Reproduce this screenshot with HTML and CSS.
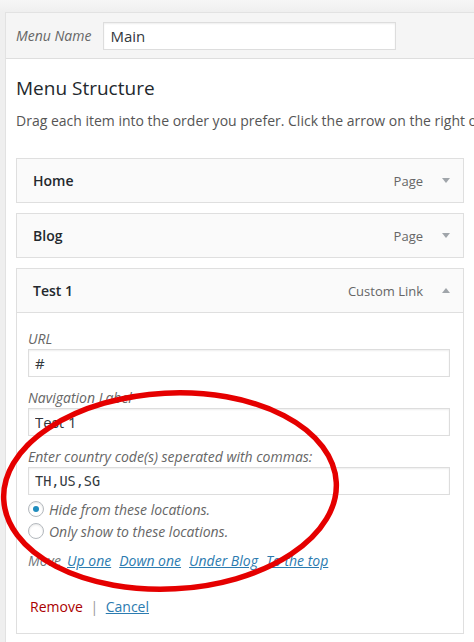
FILE: index.html
```html
<!DOCTYPE html>
<html lang="en">
<head>
<meta charset="utf-8">
<title>Menu Structure</title>
<link rel="stylesheet" href="styles.css">
</head>
<body>
<div class="wrap">
  <div class="panel">
    <div class="menu-header">
      <label class="name-label" for="menu-name">Menu Name</label>
      <input id="menu-name" class="name-input" type="text" value="Main">
    </div>
    <div class="menu-body">
      <h3 class="title">Menu Structure</h3>
      <p class="desc">Drag each item into the order you prefer. Click the arrow on the right of the item to reveal additional configuration options.</p>
      <ul class="items">
        <li class="item">
          <div class="item-bar">
            <span class="item-title">Home</span>
            <span class="item-type">Page</span>
            <svg class="arrow" width="8" height="5" viewBox="0 0 8 5"><polygon points="0,0 8,0 4,5" fill="#a0a5aa"/></svg>
          </div>
        </li>
        <li class="item">
          <div class="item-bar">
            <span class="item-title">Blog</span>
            <span class="item-type">Page</span>
            <svg class="arrow" width="8" height="5" viewBox="0 0 8 5"><polygon points="0,0 8,0 4,5" fill="#a0a5aa"/></svg>
          </div>
        </li>
        <li class="item open">
          <div class="item-bar">
            <span class="item-title">Test 1</span>
            <span class="item-type">Custom Link</span>
            <svg class="arrow" width="8" height="5" viewBox="0 0 8 5"><polygon points="0,5 8,5 4,0" fill="#a0a5aa"/></svg>
          </div>
          <div class="settings">
            <div class="field">
              <label class="field-label">URL</label>
              <input class="field-input" type="text" value="#">
            </div>
            <div class="field">
              <label class="field-label">Navigation Label</label>
              <input class="field-input" type="text" value="Test 1">
            </div>
            <div class="field">
              <label class="field-label">Enter country code(s) seperated with commas:</label>
              <input class="field-input mono" type="text" value="TH,US,SG">
            </div>
            <div class="radios">
              <label class="radio-row"><input type="radio" name="loc" checked><span>Hide from these locations.</span></label>
              <label class="radio-row"><input type="radio" name="loc"><span>Only show to these locations.</span></label>
            </div>
            <div class="move">
              <span class="move-label">Move</span>
              <a href="#">Up one</a>
              <a href="#">Down one</a>
              <a href="#">Under Blog</a>
              <a href="#">To the top</a>
            </div>
            <div class="actions">
              <a class="remove" href="#">Remove</a>
              <span class="sep">|</span>
              <a class="cancel" href="#">Cancel</a>
            </div>
          </div>
        </li>
      </ul>
    </div>
  </div>
</div>
<svg class="annotation" width="474" height="642" viewBox="0 0 474 642">
  <ellipse cx="170" cy="491" rx="166.5" ry="98" transform="rotate(-3 170 491)" fill="none" stroke="#e50000" stroke-width="5.5"/>
</svg>
</body>
</html>
```

FILE: styles.css
```css
html, body {
  margin: 0;
  padding: 0;
}
body {
  width: 474px;
  height: 642px;
  overflow: hidden;
  position: relative;
  background: #fff;
  font-family: "Open Sans", "Liberation Sans", sans-serif;
  color: #444;
}
.wrap {
  padding-top: 12px;
  background: linear-gradient(#f6f6f6, #efefef 12px);
  min-height: 642px;
}
.panel {
  margin-left: 5px;
  border-left: 1px solid #e2e2e2;
  border-top: 1px solid #e2e2e2;
  background: #fff;
  min-height: 630px;
}
.menu-header {
  display: flex;
  align-items: center;
  gap: 12px;
  height: 46px;
  box-sizing: border-box;
  padding: 0 10px;
  background: #f5f5f5;
  border-bottom: 1px solid #dedede;
}
.name-label {
  font-style: italic;
  font-size: 14px;
  color: #666;
}
.name-input {
  box-sizing: border-box;
  width: 293px;
  height: 28px;
  padding: 0 6px;
  border: 1px solid #ddd;
  box-shadow: inset 0 1px 2px rgba(0,0,0,.07);
  background: #fff;
  font-family: "Open Sans", "Liberation Sans", sans-serif;
  font-size: 15px;
  color: #32373c;
  outline: none;
}
.menu-body {
  padding: 0 10px;
}
.title {
  margin: 16px 0 0;
  font-size: 19px;
  line-height: 26px;
  font-weight: 400;
  color: #23282d;
}
.desc {
  margin: 10px 0 0;
  font-size: 14px;
  line-height: 20px;
  color: #555;
  white-space: nowrap;
}
.items {
  list-style: none;
  margin: 27px 0 0;
  padding: 0;
  width: 448px;
}
.item {
  margin-bottom: 10px;
}
.item-bar {
  display: flex;
  align-items: center;
  height: 45px;
  box-sizing: border-box;
  padding: 0 13px 0 16px;
  background: #fafafa;
  border: 1px solid #dfdfdf;
}
.item-title {
  flex: 1;
  font-size: 14px;
  font-weight: 600;
  color: #23282d;
}
.item-type {
  font-size: 13px;
  color: #666;
  margin-right: 19px;
}
.arrow {
  display: block;
}
.settings {
  border: 1px solid #dfdfdf;
  border-top: none;
  padding: 16px 13px 16px 11px;
  background: #fff;
}
.field {
  margin-bottom: 11px;
}
.field-label {
  display: block;
  font-style: italic;
  font-size: 14px;
  line-height: 20px;
  color: #666;
}
.field-input {
  display: block;
  box-sizing: border-box;
  width: 422px;
  height: 28px;
  padding: 0 6px;
  border: 1px solid #ddd;
  box-shadow: inset 0 1px 2px rgba(0,0,0,.07);
  background: #fff;
  font-family: "Open Sans", "Liberation Sans", sans-serif;
  font-size: 15px;
  color: #32373c;
  outline: none;
}
.field-input.mono {
  font-family: "DejaVu Sans Mono", "Liberation Mono", monospace;
  font-size: 13.5px;
}
.radios {
  margin-top: -8px;
}
.radio-row {
  display: flex;
  align-items: center;
  gap: 5px;
  height: 22px;
  font-style: italic;
  font-size: 14px;
  color: #666;
}
.radio-row input {
  appearance: none;
  -webkit-appearance: none;
  margin: 0;
  width: 16px;
  height: 16px;
  border: 1px solid #b4b9be;
  border-radius: 50%;
  background: #fff;
  box-shadow: inset 0 1px 2px rgba(0,0,0,.1);
  display: flex;
  align-items: center;
  justify-content: center;
  box-sizing: border-box;
}
.radio-row input:checked::before {
  content: "";
  width: 6px;
  height: 6px;
  border-radius: 50%;
  background: #1e8cbe;
}
.move {
  display: flex;
  gap: 8px;
  margin-top: 9px;
  font-style: italic;
  font-size: 14px;
  line-height: 20px;
}
.move-label {
  color: #72777c;
  margin-right: -2px;
}
.move a {
  color: #2b7bb0;
  text-decoration: underline;
}
.actions {
  margin-top: 26px;
  font-size: 14px;
  line-height: 20px;
  padding-left: 2px;
}
.remove {
  color: #a00;
  text-decoration: none;
}
.sep {
  color: #999;
  margin: 0 4px;
}
.cancel {
  color: #2b7bb0;
  text-decoration: underline;
}
.annotation {
  position: absolute;
  left: 0;
  top: 0;
  pointer-events: none;
}
```
